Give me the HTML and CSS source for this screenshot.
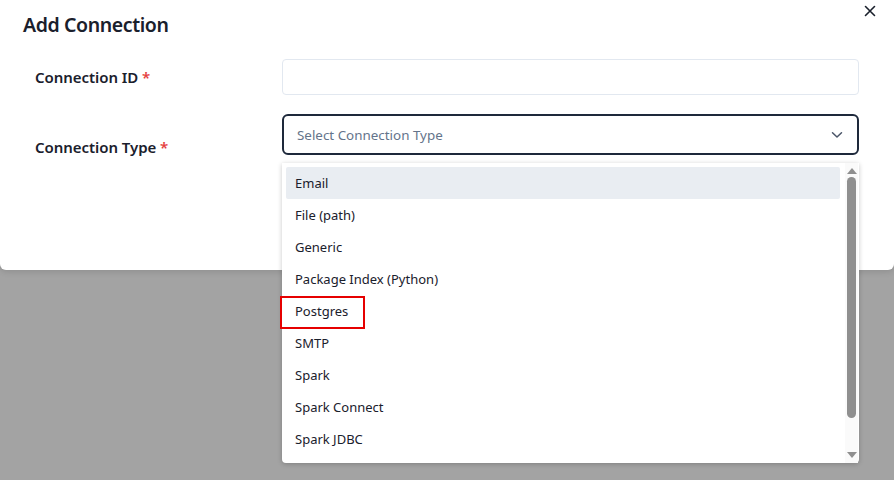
FILE: index.html
```html
<!DOCTYPE html>
<html>
<head>
<meta charset="utf-8">
<link rel="stylesheet" href="styles.css">
</head>
<body>
<div class="modal">
  <div class="modal-header">
    <h2 class="title">Add Connection</h2>
    <button class="close" aria-label="Close">
      <svg width="12" height="12" viewBox="0 0 12 12"><path d="M1.5 1.5 L10.5 10.5 M10.5 1.5 L1.5 10.5" stroke="#1a202c" stroke-width="1.6" stroke-linecap="round"/></svg>
    </button>
  </div>
  <div class="form">
    <div class="row row-id">
      <label class="label">Connection ID <span class="req">*</span></label>
      <div class="input"></div>
    </div>
    <div class="row row-type">
      <label class="label label-type">Connection Type <span class="req">*</span></label>
      <div class="select">
        <span class="placeholder">Select Connection Type</span>
        <svg class="chev" width="12" height="8" viewBox="0 0 12 8"><path d="M1.5 1.8 L6 6 L10.5 1.8" fill="none" stroke="#4a5568" stroke-width="1.5" stroke-linecap="round" stroke-linejoin="round"/></svg>
      </div>
    </div>
  </div>
</div>

<div class="listbox">
  <ul class="options">
    <li class="opt active">Email</li>
    <li class="opt">File (path)</li>
    <li class="opt">Generic</li>
    <li class="opt">Package Index (Python)</li>
    <li class="opt">Postgres<span class="mark"></span></li>
    <li class="opt">SMTP</li>
    <li class="opt">Spark</li>
    <li class="opt">Spark Connect</li>
    <li class="opt">Spark JDBC</li>
  </ul>
  <div class="scrollbar">
    <span class="arrow up"></span>
    <span class="thumb"></span>
    <span class="arrow down"></span>
  </div>
</div>
</body>
</html>
```

FILE: styles.css
```css
* { box-sizing: border-box; }
html, body { margin: 0; padding: 0; }
body {
  width: 894px;
  height: 480px;
  background: #a3a3a3;
  font-family: "Noto Sans", "Open Sans", sans-serif;
  color: #1a202c;
  position: relative;
  overflow: hidden;
}
.modal {
  background: #ffffff;
  height: 270px;
  border-radius: 0 0 6px 6px;
  box-shadow: 0 2px 6px rgba(0,0,0,0.12);
}
.modal-header {
  display: flex;
  justify-content: space-between;
  align-items: flex-start;
  padding: 11px 18px 0 23px;
}
.title {
  margin: 0;
  font-size: 19.5px;
  font-weight: 600;
  line-height: 28px;
  letter-spacing: -0.4px;
  color: #1a202c;
}
.close {
  border: 0;
  background: none;
  padding: 0;
  margin-top: -6px;
  width: 12px;
  height: 12px;
  display: flex;
}
.form {
  padding: 20px 35px 0 35px;
  display: flex;
  flex-direction: column;
  gap: 19px;
}
.row {
  display: grid;
  grid-template-columns: 247px 1fr;
  align-items: start;
}
.label {
  font-size: 15px;
  font-weight: 600;
  line-height: 20px;
  color: #1a202c;
  letter-spacing: -0.05px;
}
.row-id .label { padding-top: 8px; }
.label-type { padding-top: 23px; }
.req { color: #e53e3e; }
.input {
  height: 36px;
  border: 1px solid #e2e8f0;
  border-radius: 4px;
}
.select {
  height: 41px;
  border: 2px solid #1e293b;
  border-radius: 6px;
  display: flex;
  align-items: center;
  justify-content: space-between;
  padding: 0 14px 0 13px;
}
.placeholder {
  font-size: 13.4px;
  color: #64748b;
}
.chev { margin-top: 1px; }

.listbox {
  position: absolute;
  left: 282px;
  top: 163px;
  width: 577px;
  height: 300px;
  background: #ffffff;
  border-radius: 0 0 4px 4px;
  box-shadow: 0 1px 5px rgba(0,0,0,0.22);
  display: flex;
  padding: 4px 0 0 4px;
}
.options {
  list-style: none;
  margin: 0;
  padding: 0;
  flex: 1;
}
.opt {
  position: relative;
  height: 32px;
  line-height: 32px;
  padding-left: 9px;
  font-size: 13px;
  color: #1a202c;
  border-radius: 2px;
  margin-right: 5px;
}
.opt.active { background: #e9edf2; }
.mark {
  position: absolute;
  left: -6px;
  top: 1px;
  width: 85px;
  height: 33px;
  border: 2px solid #e60000;
}
.scrollbar {
  width: 13px;
  margin-top: -4px;
  background: #fafafa;
  display: flex;
  flex-direction: column;
  align-items: center;
  margin-right: 1px;
}
.arrow {
  width: 0;
  height: 0;
  border-left: 5px solid transparent;
  border-right: 5px solid transparent;
}
.arrow.up {
  margin-top: 5px;
  border-bottom: 6px solid #8f8f8f;
}
.arrow.down {
  margin-top: auto;
  margin-bottom: 5px;
  border-top: 6px solid #8f8f8f;
}
.thumb {
  margin-top: 3px;
  width: 9px;
  height: 241px;
  background: #8f8f8f;
  border-radius: 5px;
}
```
